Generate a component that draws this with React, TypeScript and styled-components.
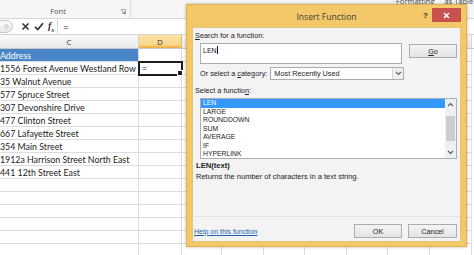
import React from 'react'
import styled, { createGlobalStyle } from 'styled-components'

const GlobalStyle = createGlobalStyle`
    html, body {
        margin: 0;
        padding: 0;
        overflow: hidden;
        background: #ffffff;
    }
`

const columns = [139, 43, 40, 42, 41, 42, 41, 42, 42]

const addresses = [
    '1556 Forest Avenue Westland Row',
    '35 Walnut Avenue',
    '577 Spruce Street',
    '307 Devonshire Drive',
    '477 Clinton Street',
    '667 Lafayette Street',
    '354 Main Street',
    '1912a Harrison Street North East',
    '441 12th Street East',
]

const functions = ['LEN', 'LARGE', 'ROUNDDOWN', 'SUM', 'AVERAGE', 'IF', 'HYPERLINK']

function Chevron({ up }: { up?: boolean }) {
    return (
        <svg width="7" height="5" viewBox="0 0 7 5">
            <path
                d={up ? 'M1 4 L3.5 1.5 L6 4' : 'M1 1 L3.5 3.5 L6 1'}
                fill="none"
                stroke="#606060"
                strokeWidth="1.2"
            />
        </svg>
    )
}

function App() {
    const rowCount = 16
    return (
        <Screen>
            <GlobalStyle />
            <Ribbon>
                <FontGroup>
                    <GroupLabel>Font</GroupLabel>
                    <Launcher>
                        <svg width="6" height="6" viewBox="0 0 6 6">
                            <path d="M0.5 0.5 H5.5 V5.5" fill="none" stroke="#9a9a9a" strokeWidth="0.8" />
                            <path d="M1.5 1.5 L4.5 4.5 M4.5 2.5 V4.5 H2.5" fill="none" stroke="#7a7a7a" strokeWidth="0.8" />
                        </svg>
                    </Launcher>
                </FontGroup>
                <RibbonSpacer />
                <TableGroup>
                    <CutLabel>Formatting</CutLabel>
                    <CutLabel>as Table</CutLabel>
                </TableGroup>
            </Ribbon>
            <FormulaBar>
                <NameBoxEnd>
                    <NameDot />
                </NameBoxEnd>
                <FormulaIcons>
                    <svg width="9" height="9" viewBox="0 0 9 9">
                        <path d="M1.5 1.5 L7.5 7.5 M7.5 1.5 L1.5 7.5" stroke="#333" strokeWidth="1.6" />
                    </svg>
                    <svg width="10" height="9" viewBox="0 0 10 9">
                        <path d="M1 4.8 L3.8 7.6 L9 1.2" fill="none" stroke="#333" strokeWidth="1.7" />
                    </svg>
                    <FxLabel>
                        f<sub>x</sub>
                    </FxLabel>
                </FormulaIcons>
                <FormulaInput>=</FormulaInput>
            </FormulaBar>
            <HeaderRow>
                {columns.map((w, i) => (
                    <HeaderCell key={i} style={{ width: w }} $active={i === 1}>
                        {i === 0 ? 'C' : i === 1 ? 'D' : ''}
                    </HeaderCell>
                ))}
            </HeaderRow>
            {Array.from({ length: rowCount }).map((_, r) => (
                <Row key={r}>
                    {columns.map((w, c) => (
                        <Cell
                            key={c}
                            style={{ width: w }}
                            $header={r === 0 && c === 0}
                            $selected={r === 1 && c === 1}
                        >
                            {c === 0 && r === 0 && 'Address'}
                            {c === 0 && r > 0 && addresses[r - 1]}
                            {c === 1 && r === 1 && (
                                <>
                                    =<FillHandle />
                                </>
                            )}
                        </Cell>
                    ))}
                </Row>
            ))}

            <Dialog>
                <TitleBar>
                    <span />
                    <Title>Insert Function</Title>
                    <TitleControls>
                        <HelpMark>?</HelpMark>
                        <CloseButton>
                            <svg width="7" height="7" viewBox="0 0 7 7">
                                <path d="M1 1 L6 6 M6 1 L1 6" stroke="#fff" strokeWidth="1.5" />
                            </svg>
                        </CloseButton>
                    </TitleControls>
                </TitleBar>
                <Body>
                    <Label>
                        <u>S</u>earch for a function:
                    </Label>
                    <SearchRow>
                        <SearchBox>
                            LEN<Caret />
                        </SearchBox>
                        <Button $width={48} $height={14}>
                            <u>G</u>o
                        </Button>
                    </SearchRow>
                    <CategoryRow>
                        <Label>
                            Or select a <u>c</u>ategory:
                        </Label>
                        <Select>
                            <span>Most Recently Used</span>
                            <SelectArrow>
                                <Chevron />
                            </SelectArrow>
                        </Select>
                    </CategoryRow>
                    <ListLabel>
                        Select a functio<u>n</u>:
                    </ListLabel>
                    <ListBox>
                        <Items>
                            {functions.map((f, i) => (
                                <Item key={f} $selected={i === 0}>
                                    {f}
                                </Item>
                            ))}
                        </Items>
                        <ScrollBar>
                            <Chevron up />
                            <Track>
                                <Thumb />
                            </Track>
                            <Chevron />
                        </ScrollBar>
                    </ListBox>
                    <Signature>LEN(text)</Signature>
                    <Description>Returns the number of characters in a text string.</Description>
                    <Footer>
                        <HelpLink>Help on this function</HelpLink>
                        <FooterButtons>
                            <Button $width={48} $height={14}>
                                OK
                            </Button>
                            <Button $width={49} $height={14}>
                                Cancel
                            </Button>
                        </FooterButtons>
                    </Footer>
                </Body>
            </Dialog>
        </Screen>
    )
}

export default App

const Screen = styled.div`
    position: relative;
    width: 474px;
    height: 255px;
    overflow: hidden;
    background: #ffffff;
    font-family: 'Liberation Sans', Arial, sans-serif;
`

const Ribbon = styled.div`
    display: flex;
    height: 18px;
    background: #f6f6f6;
    border-bottom: 1px solid #d6d6d6;
`

const FontGroup = styled.div`
    position: relative;
    width: 131px;
    flex: none;
    display: flex;
    align-items: flex-end;
    border-right: 1px solid #dcdcdc;
    box-sizing: border-box;
`

const GroupLabel = styled.div`
    font-family: 'Open Sans', sans-serif;
    font-size: 7.5px;
    color: #555;
    width: 131px;
    text-align: center;
    padding: 0 14px 2px 0;
    box-sizing: border-box;
`

const Launcher = styled.div`
    position: absolute;
    right: 4px;
    bottom: 3px;
    display: flex;
`

const RibbonSpacer = styled.div`
    width: 262px;
    flex: none;
`

const TableGroup = styled.div`
    display: flex;
    flex: none;
    gap: 10px;
    border-left: 1px solid #dcdcdc;
    padding-left: 2px;
    margin-top: -4px;
    line-height: 10px;
    white-space: nowrap;
`

const CutLabel = styled.div`
    font-family: 'Open Sans', sans-serif;
    font-size: 7.5px;
    color: #444;
    white-space: nowrap;
`

const FormulaBar = styled.div`
    display: flex;
    align-items: center;
    height: 15px;
    border-bottom: 1px solid #d4d4d4;
    background: #ffffff;
`

const NameBoxEnd = styled.div`
    width: 15px;
    height: 11px;
    margin-left: -4px;
    border: 1px solid #c6c6c6;
    border-radius: 0 7px 7px 0;
    background: linear-gradient(#fbfbfb, #e7e7e7);
    display: flex;
    align-items: center;
    justify-content: flex-end;
`

const NameDot = styled.div`
    width: 5px;
    height: 5px;
    border-radius: 50%;
    background: #d8d8d8;
    margin-right: 3px;
`

const FormulaIcons = styled.div`
    display: flex;
    align-items: center;
    gap: 4px;
    padding: 0 3px 0 8px;
    height: 100%;
    border-right: 1px solid #d4d4d4;
`

const FxLabel = styled.span`
    font-family: 'Liberation Serif', serif;
    font-style: italic;
    font-weight: bold;
    font-size: 10px;
    color: #333;
    line-height: 1;
    sub {
        font-size: 6px;
    }
`

const FormulaInput = styled.div`
    padding-left: 5px;
    font-family: 'Liberation Sans', Arial, sans-serif;
    font-size: 9px;
    color: #222;
`

const HeaderRow = styled.div`
    display: flex;
    height: 13px;
    border-bottom: 1px solid #c9c9c9;
`

const HeaderCell = styled.div<{ $active?: boolean }>`
    box-sizing: border-box;
    flex: none;
    display: flex;
    align-items: center;
    justify-content: center;
    font-family: 'Open Sans', sans-serif;
    font-size: 8px;
    color: #333;
    border-right: 1px solid ${(p) => (p.$active ? '#e3bd63' : '#d2d2d2')};
    background: ${(p) =>
        p.$active ? 'linear-gradient(#fbe3a6, #f6d27c)' : 'linear-gradient(#fafafa, #e9e9e9)'};
    box-shadow: ${(p) => (p.$active ? 'inset 0 -2px 0 #efb64e' : 'none')};
`

const Row = styled.div`
    display: flex;
    height: 13px;
`

const Cell = styled.div<{ $header?: boolean; $selected?: boolean }>`
    position: relative;
    box-sizing: border-box;
    flex: none;
    height: 13px;
    display: flex;
    align-items: center;
    white-space: nowrap;
    overflow: visible;
    padding-left: ${(p) => (p.$selected ? '3px' : '0')};
    font-family: Lato, 'Open Sans', sans-serif;
    font-size: 8.8px;
    color: ${(p) => (p.$header ? '#ffffff' : '#222')};
    background: ${(p) => (p.$header ? '#4a85c8' : p.$selected ? '#ffffff' : 'transparent')};
    border-right: 1px solid #dadcdd;
    border-bottom: 1px solid #dadcdd;
    outline: ${(p) => (p.$selected ? '2px solid #1e1e1e' : 'none')};
    outline-offset: -1px;
    z-index: ${(p) => (p.$selected ? 1 : 0)};
`

const FillHandle = styled.span`
    position: absolute;
    right: -2px;
    bottom: -2px;
    width: 4px;
    height: 4px;
    background: #1e1e1e;
    border: 1px solid #fff;
`

const Dialog = styled.div`
    position: absolute;
    left: 186px;
    top: 4px;
    width: 281px;
    height: 243px;
    box-sizing: border-box;
    background: #f2c869;
    border: 1px solid #e2b04c;
    box-shadow: 0 0 3px rgba(0, 0, 0, 0.25);
    display: flex;
    flex-direction: column;
    padding: 0 5px 4px 5px;
`

const TitleBar = styled.div`
    height: 22px;
    flex: none;
    display: grid;
    grid-template-columns: 1fr auto 1fr;
    align-items: start;
`

const Title = styled.div`
    font-family: 'Open Sans', sans-serif;
    font-size: 8.6px;
    color: #3c3c3c;
    padding-top: 6px;
`

const TitleControls = styled.div`
    display: flex;
    justify-content: flex-end;
    align-items: flex-start;
    gap: 4px;
    padding-top: 3px;
`

const HelpMark = styled.div`
    font-family: 'Liberation Sans', Arial, sans-serif;
    font-weight: bold;
    font-size: 8px;
    color: #333;
    padding-top: 3px;
`

const CloseButton = styled.div`
    width: 29px;
    height: 14px;
    background: #c9514f;
    display: flex;
    align-items: center;
    justify-content: center;
`

const Body = styled.div`
    flex: 1;
    background: #f3f3f3;
    border: 1px solid #e0c57f;
    display: flex;
    flex-direction: column;
    font-size: 7.3px;
    color: #222;
    box-sizing: border-box;
`

const Label = styled.div`
    line-height: 10px;
    margin: 3px 0 0 2px;
    white-space: nowrap;
`

const SearchRow = styled.div`
    display: flex;
    align-items: flex-start;
    gap: 7px;
    margin: 2px 0 0 7px;
    height: 21px;
`

const SearchBox = styled.div`
    width: 202px;
    height: 21px;
    box-sizing: border-box;
    background: #fff;
    border: 1px solid #abadb3;
    padding: 2px 0 0 2px;
    line-height: 9px;
    font-size: 7px;
    display: flex;
    align-items: flex-start;
`

const Caret = styled.span`
    display: inline-block;
    width: 1px;
    height: 8px;
    background: #111;
`

const Button = styled.div<{ $width: number; $height: number }>`
    width: ${(p) => p.$width}px;
    height: ${(p) => p.$height}px;
    box-sizing: border-box;
    flex: none;
    background: linear-gradient(#f4f4f4, #e4e4e4);
    border: 1px solid #acacac;
    display: flex;
    align-items: center;
    justify-content: center;
    font-size: 7.2px;
    color: #222;
    margin-top: 1px;
`

const CategoryRow = styled.div`
    display: flex;
    align-items: center;
    gap: 3px;
    margin: 3px 0 0 7px;
    height: 13px;

    ${Label} {
        margin: 0;
    }
`

const Select = styled.div`
    width: 134px;
    height: 13px;
    box-sizing: border-box;
    background: #fff;
    border: 1px solid #abadb3;
    display: flex;
    align-items: center;
    justify-content: space-between;
    padding-left: 3px;
`

const SelectArrow = styled.div`
    width: 10px;
    height: 11px;
    border-left: 1px solid #d6d6d6;
    background: #f0f0f0;
    display: flex;
    align-items: center;
    justify-content: center;
`

const ListLabel = styled.div`
    line-height: 10px;
    margin: 6px 0 0 2px;
`

const ListBox = styled.div`
    margin: 2px 0 0 7px;
    width: 257px;
    height: 61px;
    box-sizing: border-box;
    background: #fff;
    border: 1px solid #abadb3;
    display: flex;
`

const Items = styled.div`
    flex: 1;
    display: flex;
    flex-direction: column;
`

const Item = styled.div<{ $selected?: boolean }>`
    height: 8.5px;
    line-height: 8.5px;
    padding-left: 2px;
    font-size: 6.8px;
    color: ${(p) => (p.$selected ? '#fff' : '#222')};
    background: ${(p) => (p.$selected ? '#3399ff' : 'transparent')};
`

const ScrollBar = styled.div`
    width: 11px;
    background: #f0f0f0;
    display: flex;
    flex-direction: column;
    align-items: center;
    padding: 3px 0;
    box-sizing: border-box;
    gap: 3px;
`

const Track = styled.div`
    flex: 1;
    width: 100%;
    display: flex;
    flex-direction: column;
`

const Thumb = styled.div`
    margin: 6px 1px 0;
    height: 25px;
    background: #cdcdcd;
`

const Signature = styled.div`
    font-weight: bold;
    font-size: 7.6px;
    line-height: 10px;
    margin: 2px 0 0 3px;
`

const Description = styled.div`
    line-height: 10px;
    margin: 1px 0 0 3px;
    font-size: 7.5px;
`

const Footer = styled.div`
    margin-top: auto;
    border-top: 1px solid #e3e3e3;
    padding: 7px 3px 3px 1px;
    display: flex;
    align-items: center;
`

const HelpLink = styled.span`
    color: #1a5fb4;
    text-decoration: underline;
    font-size: 7px;
`

const FooterButtons = styled.div`
    margin-left: auto;
    display: flex;
    gap: 6px;

    ${Button} {
        margin-top: 0;
    }
`
